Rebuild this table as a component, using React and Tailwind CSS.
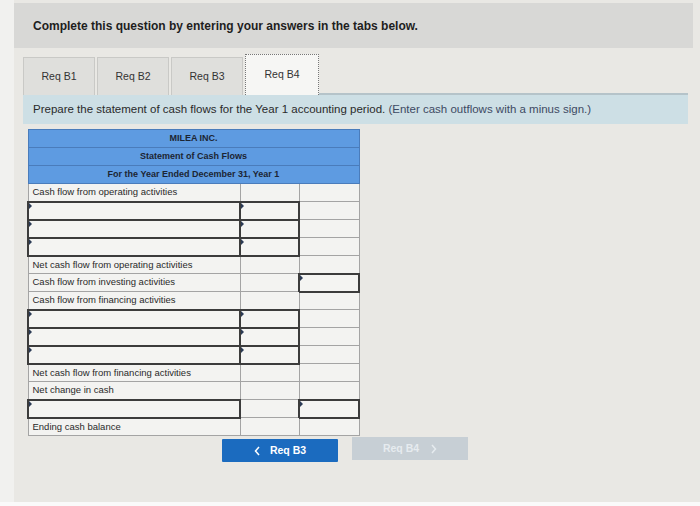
const rows = [
  { label: 'Cash flow from operating activities' },
  { input: [true, true, false] },
  { input: [true, true, false] },
  { input: [true, true, false] },
  { label: 'Net cash flow from operating activities' },
  { label: 'Cash flow from investing activities', input: [false, false, true] },
  { label: 'Cash flow from financing activities' },
  { input: [true, true, false] },
  { input: [true, true, false] },
  { input: [true, true, false] },
  { label: 'Net cash flow from financing activities' },
  { label: 'Net change in cash' },
  { input: [true, false, true] },
  { label: 'Ending cash balance' },
]

const Marker = () => (
  <span className="absolute left-0 top-0 w-0 h-0 border-t-[3px] border-b-[3px] border-l-[3px] border-t-transparent border-b-transparent border-l-[#2b3a55]"></span>
)

const Cell = ({ isInput, children }) => (
  <td
    className={`relative h-[18px] p-0 ${isInput ? 'border-2 border-[#3c3c3c] bg-[#f4f4f2]' : 'border border-[#a4a4a4] bg-[#f3f3f1]'}`}
  >
    {isInput && <Marker />}
    {children}
  </td>
)

const App = () => {
  return (
    <div className="w-[700px] h-[506px] bg-[#e9e8e4] flex flex-col font-['Liberation_Sans',sans-serif] text-[#222] overflow-hidden">
      <div className="flex flex-1">
        <div className="w-[14px] bg-[#f1f1ef]"></div>
        <div className="flex-1 pt-[3px] pr-[7px]">
          <div className="h-[45px] bg-[#d8d8d6] flex items-center pl-[19px]">
            <span className="text-[12px] font-bold text-[#1e1e1e]">Complete this question by entering your answers in the tabs below.</span>
          </div>

          <div className="flex items-end mt-[6px] pl-[9px] pr-[5px]">
            {['Req B1', 'Req B2', 'Req B3'].map((t) => (
              <div key={t} className="w-[72px] h-[38px] mr-[2px] bg-[#dfdfdc] border border-[#c9c9c6] border-b-0 flex items-center justify-center text-[10.5px] text-[#333]">
                {t}
              </div>
            ))}
            <div className="w-[74px] h-[41px] bg-[#f6f6f4] border border-dotted border-[#777] border-b-0 flex items-center justify-center text-[10.5px] text-[#333]">
              Req B4
            </div>
            <div className="flex-1 border-b-2 border-[#b5c3c9]"></div>
          </div>

          <div className="h-[29px] bg-[#cddfe5] ml-[9px] mr-[5px] flex items-center pl-[10px] text-[11.5px] text-[#2a2a2a]">
            <span>Prepare the statement of cash flows for the Year 1 accounting period.&nbsp;</span>
            <span className="text-[#3d4a63]">(Enter cash outflows with a minus sign.)</span>
          </div>

          <div className="pl-[13px] pt-[5px]">
            <table className="border-collapse w-[331px] table-fixed text-[9.5px]">
              <colgroup>
                <col className="w-[212px]" />
                <col className="w-[59px]" />
                <col className="w-[60px]" />
              </colgroup>
              <thead>
                {['MILEA INC.', 'Statement of Cash Flows', 'For the Year Ended December 31, Year 1'].map((h) => (
                  <tr key={h}>
                    <th colSpan={3} className="h-[18px] p-0 bg-[#5e9be1] border border-[#4a7cbb] font-bold text-[9px] text-[#1c2533] text-center">
                      {h}
                    </th>
                  </tr>
                ))}
              </thead>
              <tbody>
                {rows.map((r, i) => {
                  const inp = r.input || [false, false, false]
                  return (
                    <tr key={i}>
                      <Cell isInput={inp[0]}>
                        {r.label && <span className="pl-[4px] text-[#2a2a2a] whitespace-nowrap">{r.label}</span>}
                      </Cell>
                      <Cell isInput={inp[1]} />
                      <Cell isInput={inp[2]} />
                    </tr>
                  )
                })}
              </tbody>
            </table>
          </div>

          <div className="flex mt-[3px] pl-[208px] gap-[14px] items-start">
            <button className="w-[116px] h-[23px] bg-[#1b6bbf] text-white text-[10.5px] font-bold flex items-center justify-center gap-[10px] rounded-[1px]">
              <svg width="6" height="10" viewBox="0 0 6 10" fill="none" stroke="white" strokeWidth="1.5">
                <path d="M5 1 L1.5 5 L5 9" />
              </svg>
              <span>Req B3</span>
            </button>
            <button className="w-[116px] h-[23px] bg-[#c7cfd5] text-[#e6ebef] text-[10.5px] font-bold flex items-center justify-center gap-[12px] -mt-[2px]">
              <span>Req B4</span>
              <svg width="6" height="10" viewBox="0 0 6 10" fill="none" stroke="#e6ebef" strokeWidth="1.5">
                <path d="M1 1 L4.5 5 L1 9" />
              </svg>
            </button>
          </div>
        </div>
      </div>
      <div className="h-[4px] bg-[#fafafa]"></div>
    </div>
  )
}

export default App
